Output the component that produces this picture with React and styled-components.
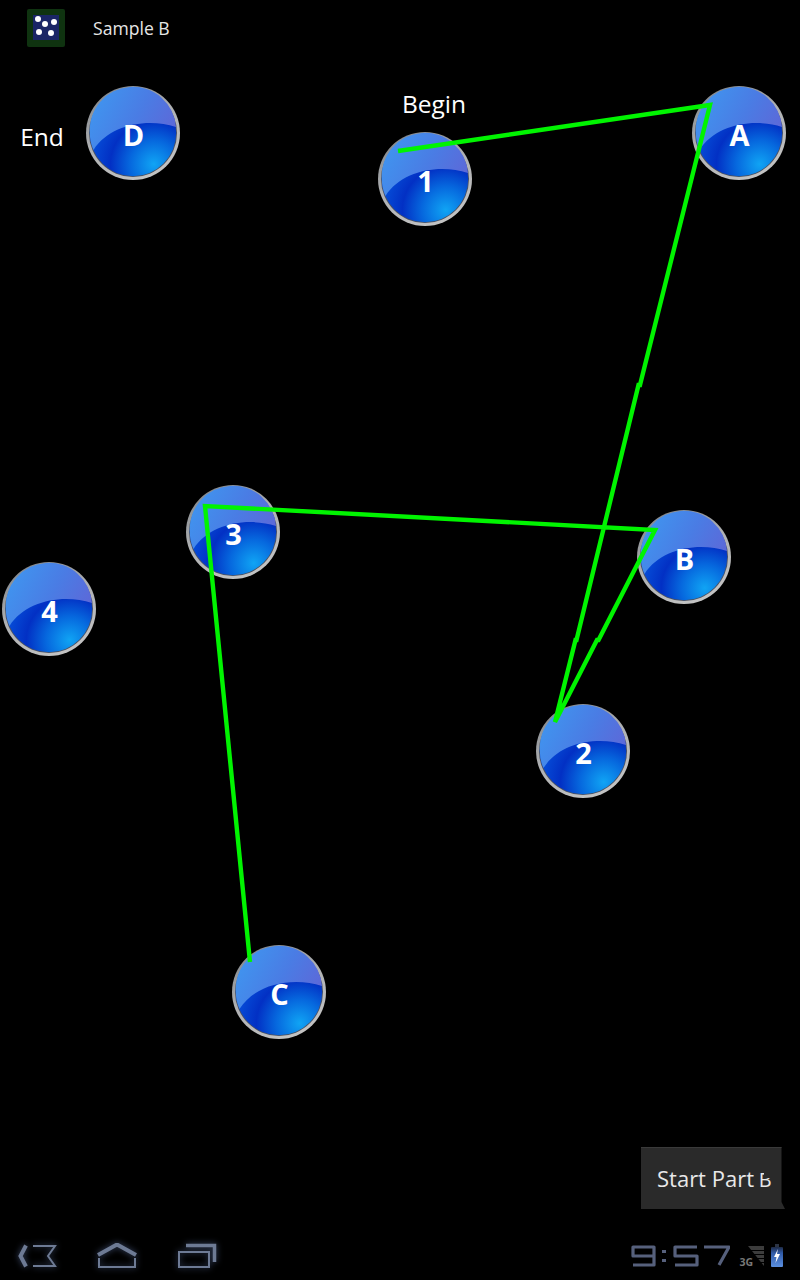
import React from 'react';
import styled, { createGlobalStyle } from 'styled-components';

const nodes = [
  { label: 'D', x: 133, y: 77 },
  { label: 'A', x: 739, y: 77 },
  { label: '1', x: 425, y: 123 },
  { label: '3', x: 233, y: 476 },
  { label: 'B', x: 684, y: 501 },
  { label: '4', x: 49, y: 553 },
  { label: '2', x: 583, y: 695 },
  { label: 'C', x: 279, y: 936 },
];

// canvas starts 56px below the top of the page
const trail = '398,95 710,49 640,329 638.5,329 576.5,584 575.5,584 555,666 597,584 598.5,584 655,474 205,450 250,906';

const Bubble = ({ id }) => (
  <BubbleArt viewBox="0 0 94 94">
    <defs>
      <linearGradient id={`rim${id}`} x1="0.2" y1="0" x2="0.7" y2="1">
        <stop offset="0" stopColor="#7f8388" />
        <stop offset="0.45" stopColor="#aeb0b2" />
        <stop offset="1" stopColor="#c4c4c4" />
      </linearGradient>
      <radialGradient id={`deep${id}`} cx="0.74" cy="0.86" r="0.76">
        <stop offset="0" stopColor="#10a4f4" />
        <stop offset="0.36" stopColor="#0668de" />
        <stop offset="0.66" stopColor="#0230c4" />
        <stop offset="1" stopColor="#0650da" />
      </radialGradient>
      <linearGradient id={`gloss${id}`} x1="0" y1="0.25" x2="1" y2="0.65">
        <stop offset="0" stopColor="#3f96f0" />
        <stop offset="0.55" stopColor="#4a7ce4" />
        <stop offset="1" stopColor="#5d68d8" />
      </linearGradient>
    </defs>
    <circle cx="47" cy="47" r="47" fill={`url(#rim${id})`} />
    <circle cx="47" cy="47" r="44" fill="#4a5060" />
    <circle cx="47" cy="47" r="43.2" fill={`url(#deep${id})`} />
    <path
      d="M7.5 64 A43.2 43.2 0 0 1 3.8 47 A43.2 43.2 0 0 1 90 41 C62 32 24 38 7.5 64 Z"
      fill={`url(#gloss${id})`}
    />
  </BubbleArt>
);

const DiceIcon = () => (
  <svg width="38" height="38" viewBox="0 0 38 38">
    <rect x="0" y="0" width="38" height="38" rx="2" fill="#0f3310" />
    <rect x="6" y="6" width="26" height="25" fill="#1a2566" />
    <circle cx="11" cy="10" r="3" fill="#fff" />
    <circle cx="27" cy="13" r="3" fill="#fff" />
    <circle cx="18" cy="15" r="3" fill="#fff" />
    <circle cx="12" cy="23" r="3" fill="#fff" />
    <circle cx="24" cy="24" r="3" fill="#fff" />
  </svg>
);

const NAV = '#6d7a94';

const BackIcon = () => (
  <svg width="40" height="26" viewBox="0 0 40 26">
    <path d="M9 2.5 L3.5 13 L9 23.5" fill="none" stroke={NAV} strokeWidth="4" />
    <path d="M16 3 H38 L31 13 L38 23 H16" fill="none" stroke={NAV} strokeWidth="2" />
  </svg>
);

const HomeIcon = () => (
  <svg width="40" height="26" viewBox="0 0 40 26">
    <path d="M1 12 L20 1.5 L39 12" fill="none" stroke={NAV} strokeWidth="4" />
    <path d="M2 15 V24 H38 V15" fill="none" stroke={NAV} strokeWidth="2" />
  </svg>
);

const RecentIcon = () => (
  <svg width="40" height="26" viewBox="0 0 40 26">
    <path d="M9 2.5 H37.5 V19" fill="none" stroke={NAV} strokeWidth="3.5" />
    <rect x="2" y="9" width="30" height="15" fill="none" stroke={NAV} strokeWidth="2" />
  </svg>
);

const Clock = () => (
  <svg width="100" height="22" viewBox="0 0 100 22">
    <g fill="none" stroke="#56607c" strokeWidth="3.2" strokeLinejoin="round">
      <path d="M24 11 H3 V2 H24 V20 H3" />
      <path d="M45 20 H67 V11 H45 V2 H67" />
      <path d="M74 2 H99 L89 20" />
    </g>
    <rect x="32" y="5" width="4" height="3" fill="#56607c" />
    <rect x="32" y="14" width="4" height="3" fill="#56607c" />
  </svg>
);

const Signal = () => (
  <SignalArt width="16" height="20" viewBox="0 0 16 20">
    <path d="M0 0 H16 V20 Z" fill="#3c3c3c" />
    <path d="M0 4.5 H16 M3 8.5 H16 M7 12.5 H16 M10 16.5 H16" stroke="#000" strokeWidth="1" />
  </SignalArt>
);

const Battery = () => (
  <svg width="14" height="24" viewBox="0 0 14 24">
    <defs>
      <linearGradient id="charge" x1="0" y1="0" x2="0" y2="1">
        <stop offset="0" stopColor="#1f2a44" />
        <stop offset="0.3" stopColor="#2f5aa8" />
        <stop offset="1" stopColor="#5c90e0" />
      </linearGradient>
    </defs>
    <rect x="5" y="0" width="4" height="3" fill="#2c3444" />
    <rect x="1" y="3" width="12" height="20" rx="1" fill="url(#charge)" />
    <path d="M8 5 L4 13 H6.5 L5.5 19 L10 10 H7 Z" fill="#fff" />
  </svg>
);

const App = () => {
  return (
    <Page>
      <GlobalStyle />
      <TitleBar>
        <DiceIcon />
        <AppTitle>Sample B</AppTitle>
      </TitleBar>
      <Canvas>
        <Trail viewBox="0 0 800 1176">
          <polyline points={trail} />
        </Trail>
        <Caption $x={434} $y={47}>Begin</Caption>
        <Caption $x={42} $y={80}>End</Caption>
        {nodes.map((n) => (
          <Node key={n.label} $x={n.x} $y={n.y}>
            <Bubble id={n.label} />
            <NodeLabel>{n.label}</NodeLabel>
          </Node>
        ))}
        <StartButton>
          Start Part <LastLetter>B</LastLetter>
        </StartButton>
      </Canvas>
      <NavBar>
        <NavButtons>
          <BackIcon />
          <HomeIcon />
          <RecentIcon />
        </NavButtons>
        <StatusArea>
          <Clock />
          <NetworkType>3G</NetworkType>
          <Signal />
          <Battery />
        </StatusArea>
      </NavBar>
    </Page>
  );
};

const GlobalStyle = createGlobalStyle`
  html, body {
    margin: 0;
    padding: 0;
    background: #000;
  }
`;

const Page = styled.div`
  width: 800px;
  height: 1280px;
  display: flex;
  flex-direction: column;
  background: #000;
  color: #fff;
  font-family: "Open Sans", "Noto Sans", sans-serif;
  overflow: hidden;
`;

const TitleBar = styled.div`
  height: 56px;
  flex: none;
  display: flex;
  align-items: center;
  padding-left: 27px;
  gap: 28px;
  box-sizing: border-box;
`;

const AppTitle = styled.div`
  font-size: 17.6px;
  color: #e6e6e6;
`;

const Canvas = styled.div`
  position: relative;
  flex: 1;
  display: flex;
  align-items: flex-end;
  justify-content: flex-end;
  padding: 0 15px 23px 0;
`;

const Trail = styled.svg`
  position: absolute;
  left: 0;
  top: 0;
  width: 800px;
  height: 1176px;
  z-index: 2;
  polyline {
    fill: none;
    stroke: #00f400;
    stroke-width: 4.4;
    stroke-linejoin: miter;
  }
`;

const Caption = styled.div`
  position: absolute;
  left: ${(p) => p.$x}px;
  top: ${(p) => p.$y}px;
  transform: translate(-50%, -50%);
  font-size: 24.5px;
`;

const Node = styled.div`
  position: absolute;
  left: ${(p) => p.$x - 47}px;
  top: ${(p) => p.$y - 47}px;
  width: 94px;
  height: 94px;
  display: flex;
  align-items: center;
  justify-content: center;
`;

const BubbleArt = styled.svg`
  position: absolute;
  inset: 0;
  width: 94px;
  height: 94px;
`;

const NodeLabel = styled.span`
  position: relative;
  font-size: 29px;
  font-weight: 700;
  line-height: 1;
  top: 1px;
  left: 0.5px;
`;

const StartButton = styled.div`
  position: relative;
  width: 144px;
  height: 62px;
  box-sizing: border-box;
  background: #2a2a2a;
  box-shadow: inset 0 1px 0 #3a3a3a;
  padding-left: 16px;
  font-size: 22px;
  line-height: 62px;
  white-space: pre;
  color: #e8e8e8;
  clip-path: polygon(0 0, 140.5px 0, 140.5px 55px, 144px 62px, 0 62px);
  &::after {
    content: '';
    position: absolute;
    left: 123px;
    top: 22px;
    width: 12px;
    height: 9px;
    background: #2a2a2a;
  }
`;

const LastLetter = styled.span`
  margin-left: -1px;
  font-size: 20px;
`;

const NavBar = styled.div`
  height: 48px;
  flex: none;
  display: flex;
  align-items: center;
  justify-content: space-between;
  padding: 0 16px 0 17px;
  box-sizing: border-box;
`;

const NavButtons = styled.div`
  display: flex;
  align-items: center;
  gap: 40px;
  svg {
    filter: drop-shadow(0 0 3px #3c4a6a);
  }
`;

const StatusArea = styled.div`
  display: flex;
  align-items: center;
  gap: 3px;
`;

const SignalArt = styled.svg`
  margin-right: 3px;
`;

const NetworkType = styled.span`
  font-size: 10.5px;
  font-weight: 700;
  color: #777;
  align-self: flex-end;
  margin-left: 6px;
  margin-right: -8px;
  line-height: 1;
  padding-bottom: 1px;
`;

export default App;
